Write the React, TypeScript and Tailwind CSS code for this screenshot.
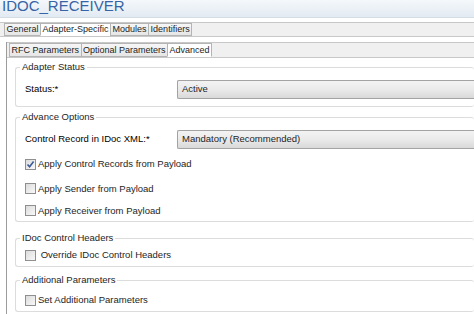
import React from 'react';

const font = { fontFamily: '"Liberation Sans", Arial, sans-serif' };

function Tab({ label, active }: { label: string; active?: boolean }) {
  return (
    <div
      className={`h-full px-[1.5px] flex items-center border border-[#b4b4b4] -ml-px text-[9px] text-[#1e1e1e] ${
        active ? 'bg-white border-b-white' : 'bg-gradient-to-b from-[#f6f6f6] to-[#e6e6e6]'
      }`}
    >
      {label}
    </div>
  );
}

function Group({
  title,
  className,
  children,
}: {
  title: string;
  className: string;
  children: React.ReactNode;
}) {
  return (
    <div className={`relative border border-[#dcdcdc] rounded-[3px] border-r-0 ${className}`}>
      <span className="absolute -top-[6px] left-[4px] bg-white px-[2px] text-[#1e1e1e]">{title}</span>
      {children}
    </div>
  );
}

function Select({ value }: { value: string }) {
  return (
    <div className="flex-1 h-[19px] border border-[#a3a3a3] border-r-0 rounded-l-[2px] bg-gradient-to-b from-[#f3f3f3] via-[#eaeaea] to-[#d9d9d9] flex items-center pl-[4px] text-[#1e1e1e]">
      {value}
    </div>
  );
}

function Check({ label, checked, h = 'h-[24px]' }: { label: string; checked?: boolean; h?: string }) {
  return (
    <div className={`flex items-center ${h} pl-[9px] gap-[2px]`}>
      <div className="w-[11px] h-[11px] border border-[#8f8f8f] bg-gradient-to-br from-[#dcdcdc] to-[#f8f8f8] flex items-center justify-center">
        {checked && (
          <svg width="9" height="9" viewBox="0 0 9 9">
            <path d="M1.5 4.5 L3.6 6.8 L7.6 1.6" stroke="#3b5a9a" strokeWidth="1.6" fill="none" />
          </svg>
        )}
      </div>
      <span className="text-[#1e1e1e] whitespace-pre">{label}</span>
    </div>
  );
}

export default function App() {
  return (
    <div className="w-[474px] h-[314px] overflow-hidden bg-white text-[9.5px] leading-none" style={font}>
      {/* title */}
      <div className="h-[18px] bg-gradient-to-b from-[#f5f8fb] to-[#e2eaf2] border-b border-[#d3dde6] overflow-hidden">
        <div className="text-[15px] leading-[15px] text-[#3764a6] -mt-[2px] pl-[2px]">IDOC_RECEIVER</div>
      </div>

      {/* top tabs */}
      <div className="mt-[4px] h-[15px] flex bg-[#f0f0f0] border-y border-[#c8c8c8] pl-[5px]">
        <Tab label="General" />
        <Tab label="Adapter-Specific" active />
        <Tab label="Modules" />
        <Tab label="Identifiers" />
      </div>

      <div className="ml-[6px] border-l border-[#9c9c9c] h-full">
        {/* sub tabs */}
        <div className="mt-[5px] h-[16px] flex bg-[#f0f0f0] border-y border-[#c8c8c8] pl-[3px]">
          <Tab label="RFC Parameters" />
          <Tab label="Optional Parameters" />
          <Tab label="Advanced" active />
        </div>

        <div className="pl-[8px] pt-[9px] flex flex-col">
          <Group title="Adapter Status" className="pt-[9px] pb-[5px]">
            <div className="flex items-center h-[24px] pl-[9px]">
              <span className="w-[152px]">Status:*</span>
              <Select value="Active" />
            </div>
          </Group>

          <Group title="Advance Options" className="mt-[10px] pt-[9px]">
            <div className="flex items-center h-[24px] pl-[9px]">
              <span className="w-[152px]">Control Record in IDoc XML:*</span>
              <Select value="Mandatory (Recommended)" />
            </div>
            <Check label="Apply Control Records from Payload" checked h="h-[26px]" />
            <Check label="Apply Sender from Payload" h="h-[23px]" />
            <Check label="Apply Receiver from Payload" h="h-[21px]" />
          </Group>

          <Group title="IDoc Control Headers" className="mt-[16px] pt-[5px]">
            <Check label=" Override IDoc Control Headers" h="h-[22px]" />
          </Group>

          <Group title="Additional Parameters" className="mt-[13px] pt-[8px]">
            <Check label="Set Additional Parameters" h="h-[22px]" />
          </Group>
        </div>
      </div>
    </div>
  );
}
